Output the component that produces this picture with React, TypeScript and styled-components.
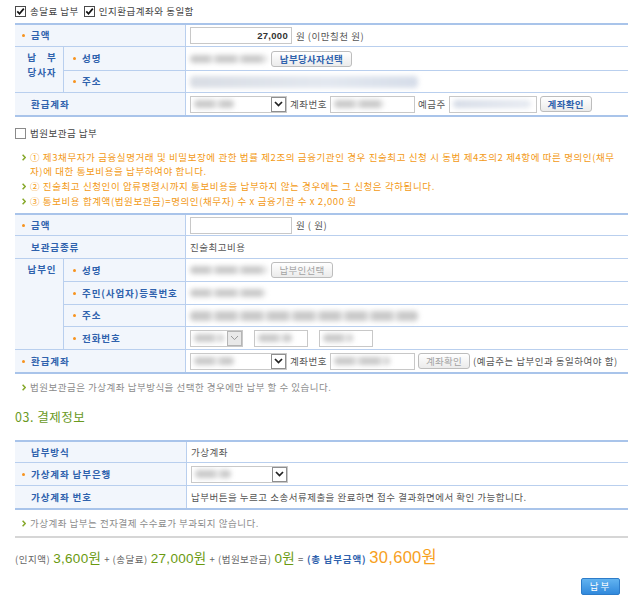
import React from 'react';
import styled, { createGlobalStyle } from 'styled-components';

const Global = createGlobalStyle`
  html, body { margin: 0; padding: 0; background: #fff; }
  body {
    font-family: "Noto Sans CJK KR", "Noto Sans", sans-serif;
    font-size: 9.5px;
    letter-spacing: 0.5px;
    color: #555;
  }
  * { box-sizing: border-box; }
`;

const LINE = '#b9cfee';
const EDGE = '#a9c4ea';
const BLUE = '#2f62ad';

const Page = styled.div`
  width: 633px;
  padding: 5px 5px 0 15px;
  display: flex;
  flex-direction: column;
`;

const CheckRow = styled.div<{ $mt?: number }>`
  display: flex;
  align-items: center;
  height: 13px;
  margin-top: ${p => p.$mt ?? 0}px;
  color: #444;
`;

const CheckLabel = styled.label`
  display: inline-flex;
  align-items: center;
  gap: 4px;
  margin-right: 5px;
  line-height: 13px;
`;

const Box = styled.span<{ $checked?: boolean }>`
  display: inline-flex;
  width: 11px;
  height: 11px;
  border: 1px solid ${p => (p.$checked ? '#4a4a4a' : '#8a8a8a')};
  background: #fff;
  align-items: center;
  justify-content: center;
  svg { display: block; }
`;

const Check = ({ checked }: { checked?: boolean }) => (
  <Box $checked={checked}>
    {checked && (
      <svg width="9" height="9" viewBox="0 0 9 9">
        <path d="M1.3 4.4 L3.5 6.8 L7.8 1.6" fill="none" stroke="#111" strokeWidth="1.7" />
      </svg>
    )}
  </Box>
);

const Grid = styled.div<{ $cols: string; $rows: string; $mt?: number }>`
  display: grid;
  grid-template-columns: ${p => p.$cols};
  grid-template-rows: ${p => p.$rows};
  width: 613px;
  border-top: 2px solid ${EDGE};
  border-bottom: 2px solid ${EDGE};
  margin-top: ${p => p.$mt ?? 0}px;
`;

const Label = styled.div<{ $span?: number; $rows?: number; $pl?: number; $group?: boolean; $last?: boolean }>`
  grid-column: span ${p => p.$span ?? 1};
  grid-row: span ${p => p.$rows ?? 1};
  background: #f2f6fc;
  color: ${BLUE};
  font-weight: 700;
  letter-spacing: 0.9px;
  display: flex;
  flex-direction: ${p => (p.$group ? 'column' : 'row')};
  align-items: center;
  justify-content: flex-start;
  padding: ${p => (p.$group ? '3px 0 0 6px' : `0 0 0 ${p.$pl ?? 7}px`)};
  border-bottom: ${p => (p.$last ? 'none' : `1px solid ${LINE}`)};
  border-right: 1px solid ${LINE};
  line-height: 15px;
  white-space: nowrap;
`;

const Spread = styled.span`
  word-spacing: 7px;
`;

const Dot = styled.span<{ $show?: boolean }>`
  flex: none;
  width: 3px;
  height: 3px;
  border-radius: 50%;
  background: ${p => (p.$show ? '#f7931e' : 'transparent')};
  margin-right: 6px;
`;

const Value = styled.div<{ $last?: boolean; $gap?: number }>`
  display: flex;
  align-items: center;
  gap: ${p => p.$gap ?? 3}px;
  padding: 0 4px;
  border-bottom: ${p => (p.$last ? 'none' : `1px solid ${LINE}`)};
  white-space: nowrap;
  line-height: 14px;
  min-width: 0;
`;

const Field = styled.div<{ $w: number; $right?: boolean }>`
  flex: none;
  width: ${p => p.$w}px;
  height: 17px;
  border: 1px solid #c8c8c8;
  background: #fff;
  display: flex;
  align-items: center;
  justify-content: ${p => (p.$right ? 'flex-end' : 'flex-start')};
  padding: 0 3px;
  overflow: hidden;
  color: #333;
  font-weight: ${p => (p.$right ? 700 : 400)};
  font-family: "Liberation Sans", "Noto Sans CJK KR", sans-serif;
  letter-spacing: 0.3px;
`;

const SelectBox = styled.div<{ $w: number }>`
  flex: none;
  width: ${p => p.$w}px;
  height: 17px;
  border: 1px solid #c9c9c9;
  background: #fff;
  display: flex;
  align-items: center;
  justify-content: space-between;
  padding-left: 3px;
  overflow: hidden;
`;

const Arrow = styled.span<{ $gray?: boolean }>`
  width: 15px;
  height: 15px;
  border: 1px solid ${p => (p.$gray ? '#b5b5b5' : '#8f8f8f')};
  background: ${p => (p.$gray ? '#e9e9e9' : '#fff')};
  display: inline-flex;
  align-items: center;
  justify-content: center;
  flex: none;
  svg { display: block; }
`;

const Smear = styled.span<{ $w: number; $tone?: string; $h?: number }>`
  display: inline-block;
  flex: none;
  width: ${p => p.$w}px;
  height: ${p => p.$h ?? 8}px;
  border-radius: 4px;
  background: ${p =>
    p.$tone ?? 'repeating-linear-gradient(90deg, #c9c9c9 0 20px, #e4e4e4 20px 26px)'};
  filter: blur(2.4px);
`;

const FakeSelect = ({ w, smear, gray }: { w: number; smear: number; gray?: boolean }) => (
  <SelectBox $w={w}>
    <Smear $w={smear} />
    <Arrow $gray={gray}>
      <svg width="9" height="6" viewBox="0 0 9 6">
        <path d="M1 1 L4.5 4.6 L8 1" fill="none" stroke={gray ? '#9a9a9a' : '#222'} strokeWidth={gray ? 1 : 1.7} />
      </svg>
    </Arrow>
  </SelectBox>
);

const Btn = styled.span<{ $w: number; $disabled?: boolean }>`
  flex: none;
  display: inline-flex;
  align-items: center;
  justify-content: center;
  width: ${p => p.$w}px;
  height: 16px;
  border: 1px solid #bdbdbd;
  border-radius: 3px;
  background: linear-gradient(#ffffff, #ebebeb);
  color: ${p => (p.$disabled ? '#a3a3a3' : BLUE)};
  font-weight: ${p => (p.$disabled ? 400 : 700)};
  letter-spacing: 0.3px;
`;

const Notes = styled.ul<{ $mt?: number }>`
  list-style: none;
  margin: ${p => p.$mt ?? 0}px 0 0;
  padding: 0 0 0 7px;
  display: flex;
  flex-direction: column;
  gap: 1px;
`;

const Note = styled.li<{ $orange?: boolean }>`
  display: flex;
  align-items: flex-start;
  gap: 4px;
  line-height: 14px;
  color: ${p => (p.$orange ? '#f39a16' : '#8c8c8c')};
  white-space: nowrap;
  letter-spacing: ${p => (p.$orange ? '0.6px' : '0.5px')};
`;

const NoteText = styled.span`
  display: block;
`;

const BulletWrap = styled.span`
  flex: none;
  display: block;
  padding-top: 4px;
  height: 14px;
  svg { display: block; }
`;

const Bullet = () => (
  <BulletWrap>
    <svg width="4" height="7" viewBox="0 0 4 7">
      <path d="M0.6 0.8 L3.2 3.5 L0.6 6.2" fill="none" stroke="#86a82a" strokeWidth="1.5" />
    </svg>
  </BulletWrap>
);

const Title = styled.h3`
  margin: 15px 0 0;
  height: 16px;
  font-size: 12.5px;
  font-weight: 400;
  line-height: 16px;
  color: #6a9a1f;
  letter-spacing: 0.5px;
`;

const Divider = styled.hr`
  margin: 6px 0 0;
  width: 613px;
  border: none;
  border-top: 2px solid #d6d6d6;
  height: 0;
`;

const Totals = styled.div`
  margin-top: 9px;
  height: 20px;
  display: flex;
  align-items: baseline;
  gap: 3px;
  white-space: nowrap;
  color: #666;
  line-height: 20px;
`;

const Amount = styled.span<{ $big?: boolean }>`
  font-family: "Liberation Sans", "Noto Sans CJK KR", sans-serif;
  font-size: ${p => (p.$big ? 16.5 : 13.5)}px;
  color: ${p => (p.$big ? '#f7a01c' : '#6a9a10')};
  letter-spacing: 0.3px;
`;

const TotalLabel = styled.span`
  color: ${BLUE};
  font-weight: 700;
  letter-spacing: 0.8px;
`;

const SubmitRow = styled.div`
  display: flex;
  justify-content: flex-end;
  width: 613px;
  padding-right: 8px;
  margin-top: 11px;
`;

const Submit = styled.button`
  width: 39px;
  height: 17px;
  border: 1px solid #2d7cc9;
  border-radius: 2px;
  background: linear-gradient(#62b3f0, #3189dc);
  color: #fff;
  font-family: "Noto Sans CJK KR", sans-serif;
  font-size: 9.5px;
  letter-spacing: 2px;
  padding: 0;
  line-height: 15px;
`;

const Lbl = ({ dot, children }: { dot?: boolean; children: React.ReactNode }) => (
  <>
    <Dot $show={dot} />
    <span>{children}</span>
  </>
);

const COLS3 = '49px 122px 1fr';

export default function App() {
  return (
    <>
      <Global />
      <Page>
        <CheckRow>
          <CheckLabel>
            <Check checked />
            송달료 납부
          </CheckLabel>
          <CheckLabel>
            <Check checked />
            인지환급계좌와 동일함
          </CheckLabel>
        </CheckRow>

        <Grid $cols={COLS3} $rows="22px 24px 22px 22px" $mt={5}>
          <Label $span={2}>
            <Lbl dot>금액</Lbl>
          </Label>
          <Value $gap={4}>
            <Field $w={102} $right>27,000</Field>
            <span>원 (이만칠천 원)</span>
          </Value>

          <Label $rows={2} $group>
            <Spread>납 부</Spread>
            <span>당사자</span>
          </Label>
          <Label $pl={9}>
            <Lbl dot>성명</Lbl>
          </Label>
          <Value>
            <Smear $w={78} />
            <Btn $w={81}>납부당사자선택</Btn>
          </Value>
          <Label $pl={9}>
            <Lbl dot>주소</Lbl>
          </Label>
          <Value>
            <Smear $w={228} $h={12} $tone="linear-gradient(90deg, #d9dde4, #e3e8f0 60%, #d6dde9)" />
          </Value>

          <Label $span={2} $last>
            <Lbl>환급계좌</Lbl>
          </Label>
          <Value $last>
            <FakeSelect w={97} smear={40} />
            <span>계좌번호</span>
            <Field $w={85}>
              <Smear $w={50} />
            </Field>
            <span>예금주</span>
            <Field $w={88}>
              <Smear $w={78} $tone="linear-gradient(90deg, #d5dbe6, #e6eaf1)" />
            </Field>
            <Btn $w={52}>계좌확인</Btn>
          </Value>
        </Grid>

        <CheckRow $mt={10}>
          <CheckLabel>
            <Check />
            법원보관금 납부
          </CheckLabel>
        </CheckRow>

        <Notes $mt={10}>
          <Note $orange>
            <Bullet />
            <NoteText>
              ① 제3채무자가 금융실명거래 및 비밀보장에 관한 법률 제2조의 금융기관인 경우 진술최고 신청 시 동법 제4조의2 제4항에 따른 명의인(채무
              <br />
              자)에 대한 통보비용을 납부하여야 합니다.
            </NoteText>
          </Note>
          <Note $orange>
            <Bullet />
            <NoteText>② 진술최고 신청인이 압류명령시까지 통보비용을 납부하지 않는 경우에는 그 신청은 각하됩니다.</NoteText>
          </Note>
          <Note $orange>
            <Bullet />
            <NoteText>③ 통보비용 합계액(법원보관금)=명의인(채무자) 수 x 금융기관 수 x 2,000 원</NoteText>
          </Note>
        </Notes>

        <Grid $cols={COLS3} $rows="21px 23px 23px 23px 22px 23px 22px" $mt={5}>
          <Label $span={2}>
            <Lbl dot>금액</Lbl>
          </Label>
          <Value $gap={4}>
            <Field $w={102} />
            <span>원 ( 원)</span>
          </Value>

          <Label $span={2}>
            <Lbl>보관금종류</Lbl>
          </Label>
          <Value>진술최고비용</Value>

          <Label $rows={4} $group>
            <span>납부인</span>
          </Label>
          <Label $pl={9}>
            <Lbl dot>성명</Lbl>
          </Label>
          <Value>
            <Smear $w={78} />
            <Btn $w={62} $disabled>
              납부인선택
            </Btn>
          </Value>
          <Label $pl={9}>
            <Lbl dot>주민(사업자)등록번호</Lbl>
          </Label>
          <Value>
            <Smear $w={76} />
          </Value>
          <Label $pl={9}>
            <Lbl dot>주소</Lbl>
          </Label>
          <Value>
            <Smear $w={228} $h={10} />
          </Value>
          <Label $pl={9}>
            <Lbl dot>전화번호</Lbl>
          </Label>
          <Value $gap={11}>
            <FakeSelect w={53} smear={30} gray />
            <Field $w={54}>
              <Smear $w={34} />
            </Field>
            <Field $w={54}>
              <Smear $w={30} />
            </Field>
          </Value>

          <Label $span={2} $last>
            <Lbl dot>환급계좌</Lbl>
          </Label>
          <Value $last>
            <FakeSelect w={97} smear={40} />
            <span>계좌번호</span>
            <Field $w={85}>
              <Smear $w={56} />
            </Field>
            <Btn $w={52} $disabled>
              계좌확인
            </Btn>
            <span>(예금주는 납부인과 동일하여야 함)</span>
          </Value>
        </Grid>

        <Notes $mt={6}>
          <Note>
            <Bullet />
            <NoteText>법원보관금은 가상계좌 납부방식을 선택한 경우에만 납부 할 수 있습니다.</NoteText>
          </Note>
        </Notes>

        <Title>03. 결제정보</Title>

        <Grid $cols="172px 1fr" $rows="21px 23px 22px" $mt={15}>
          <Label>
            <Lbl>납부방식</Lbl>
          </Label>
          <Value>가상계좌</Value>
          <Label>
            <Lbl dot>가상계좌 납부은행</Lbl>
          </Label>
          <Value>
            <FakeSelect w={97} smear={36} />
          </Value>
          <Label $last>
            <Lbl>가상계좌 번호</Lbl>
          </Label>
          <Value $last>납부버튼을 누르고 소송서류제출을 완료하면 접수 결과화면에서 확인 가능합니다.</Value>
        </Grid>

        <Notes $mt={6}>
          <Note>
            <Bullet />
            <NoteText>가상계좌 납부는 전자결제 수수료가 부과되지 않습니다.</NoteText>
          </Note>
        </Notes>

        <Divider />

        <Totals>
          <span>(인지액)</span>
          <Amount>3,600원</Amount>
          <span>+ (송달료)</span>
          <Amount>27,000원</Amount>
          <span>+ (법원보관금)</span>
          <Amount>0원</Amount>
          <span>=</span>
          <TotalLabel>(총 납부금액)</TotalLabel>
          <Amount $big>30,600원</Amount>
        </Totals>

        <SubmitRow>
          <Submit type="button">납부</Submit>
        </SubmitRow>
      </Page>
    </>
  );
}
